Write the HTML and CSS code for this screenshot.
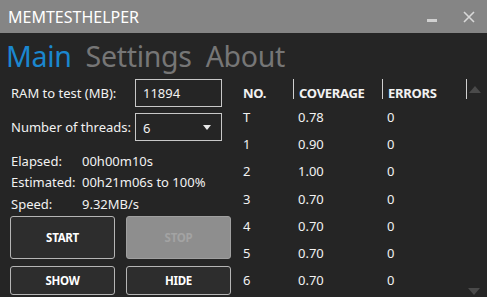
FILE: index.html
```html
<!DOCTYPE html>
<html>
<head>
<meta charset="utf-8">
<link rel="stylesheet" href="styles.css">
</head>
<body>
<div class="window">
  <div class="titlebar">
    <span class="title">MEMTESTHELPER</span>
    <div class="controls">
      <span class="min"></span>
      <svg class="close" width="12" height="12" viewBox="0 0 12 12"><path d="M1 1 L11 11 M11 1 L1 11" stroke="#d8d8d8" stroke-width="1.6"/></svg>
    </div>
  </div>
  <div class="tabs">
    <span class="tab active">Main</span>
    <span class="tab">Settings</span>
    <span class="tab">About</span>
  </div>
  <div class="content">
    <div class="left">
      <div class="field">
        <span class="label">RAM to test (MB):</span>
        <div class="box">11894</div>
      </div>
      <div class="field">
        <span class="label">Number of threads:</span>
        <div class="box select"><span>6</span><svg width="8" height="5" viewBox="0 0 8 5"><path d="M0 0 H8 L4 5 Z" fill="#e8e8e8"/></svg></div>
      </div>
      <div class="stats">
        <div class="stat"><span class="k">Elapsed:</span><span>00h00m10s</span></div>
        <div class="stat"><span class="k">Estimated:</span><span>00h21m06s to 100%</span></div>
        <div class="stat"><span class="k">Speed:</span><span>9.32MB/s</span></div>
      </div>
      <div class="buttons">
        <button class="btn big">START</button>
        <button class="btn big disabled">STOP</button>
        <button class="btn">SHOW</button>
        <button class="btn">HIDE</button>
      </div>
    </div>
    <div class="right">
      <div class="thead">
        <span class="th c1">NO.</span>
        <span class="th c2">COVERAGE</span>
        <span class="th c3">ERRORS</span>
        <span class="th c4"></span>
      </div>
      <div class="row"><span class="c1">T</span><span class="c2">0.78</span><span class="c3">0</span></div>
      <div class="row"><span class="c1">1</span><span class="c2">0.90</span><span class="c3">0</span></div>
      <div class="row"><span class="c1">2</span><span class="c2">1.00</span><span class="c3">0</span></div>
      <div class="row"><span class="c1">3</span><span class="c2">0.70</span><span class="c3">0</span></div>
      <div class="row"><span class="c1">4</span><span class="c2">0.70</span><span class="c3">0</span></div>
      <div class="row"><span class="c1">5</span><span class="c2">0.70</span><span class="c3">0</span></div>
      <div class="row"><span class="c1">6</span><span class="c2">0.70</span><span class="c3">0</span></div>
      <svg class="up" width="12" height="7" viewBox="0 0 12 7"><path d="M0 7 H12 L6 0 Z" fill="#4a4a4a"/></svg>
      <svg class="down" width="12" height="7" viewBox="0 0 12 7"><path d="M0 0 H12 L6 7 Z" fill="#4a4a4a"/></svg>
    </div>
  </div>
</div>
</body>
</html>
```
FILE: styles.css
```css
* { box-sizing: border-box; }
html, body { margin: 0; padding: 0; }
body {
  width: 487px;
  height: 297px;
  overflow: hidden;
  background: #252525;
  font-family: "Noto Sans", "Open Sans", sans-serif;
  color: #f2f2f2;
}
.window { width: 487px; height: 297px; display: flex; flex-direction: column; }
.titlebar {
  height: 33px;
  background: #858585;
  display: flex;
  align-items: center;
  justify-content: space-between;
  padding: 0 12px 0 8px;
}
.title { color: #ffffff; font-size: 16px; letter-spacing: 0; padding-top: 1px; }
.controls { display: flex; align-items: center; gap: 26px; }
.min { width: 10px; height: 3px; background: #d0d0d0; margin-top: 8px; }
.close { display: block; }
.tabs {
  display: flex;
  gap: 14px;
  padding: 4px 0 0 6px;
  height: 42px;
  font-size: 28.5px;
  line-height: 38px;
}
.tab { color: #767676; letter-spacing: -0.3px; }
.tab.active { color: #1b87cf; }
.content { display: flex; flex: 1; }
.left { width: 235px; padding: 4px 0 0 10px; font-size: 13px; }
.field { display: flex; align-items: center; height: 28px; margin-bottom: 6px; }
.label { width: 125px; padding-left: 1px; }
.box {
  width: 87px;
  height: 28px;
  border: 1px solid #c8c8c8;
  padding: 0 0 0 7px;
  display: flex;
  align-items: center;
}
.select { justify-content: space-between; padding-right: 10px; }
.select span { padding-top: 2px; }
.stats { padding-top: 3px; padding-left: 1px; }
.stat { display: flex; height: 21.5px; align-items: center; }
.stat .k { width: 71px; }
.buttons {
  display: grid;
  grid-template-columns: 105px 105px;
  grid-template-rows: 43px 29px;
  column-gap: 11px;
  row-gap: 7px;
  margin-top: 1px;
}
.btn {
  background: #2d2d2d;
  border: 1px solid #b5b5b5;
  border-radius: 3px;
  color: #ffffff;
  font-family: inherit;
  font-weight: bold;
  font-size: 11.5px;
  letter-spacing: -0.3px;
  padding: 0;
}
.btn.disabled { background: #8e8e8e; color: #a3a3a3; border-color: #a0a0a0; }
.right { flex: 1; position: relative; font-size: 13px; padding-top: 4px; }
.thead { display: flex; height: 20px; margin-bottom: 4px; }
.th { font-weight: bold; height: 20px; line-height: 18px; padding-top: 5px; letter-spacing: -0.3px; }
.c1 { width: 58px; padding-left: 8px; }
.c2 { width: 89px; padding-left: 5px; }
.c3 { width: 84px; padding-left: 5px; }
.thead .c2, .thead .c3, .thead .c4 { border-left: 1px solid #d0d0d0; }
.c4 { width: 10px; }
.row { display: flex; height: 27.3px; align-items: center; }
.up { position: absolute; left: 234px; top: 11px; }
.down { position: absolute; left: 233px; top: 213px; }
```
